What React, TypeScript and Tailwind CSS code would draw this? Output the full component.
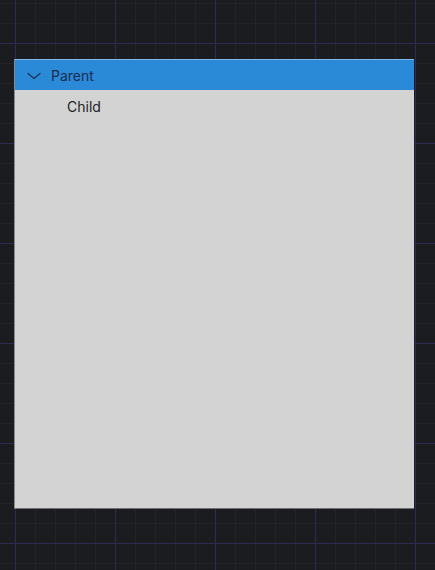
export default function App() {
  return (
    <div
      className="h-[570px] w-[435px] overflow-hidden bg-[#1b1c1f] pt-[59px] pl-[14px] font-['Inter','Liberation_Sans',sans-serif] bg-[image:linear-gradient(to_right,#2a2c52_1px,transparent_1px),linear-gradient(to_bottom,#2a2c52_1px,transparent_1px),linear-gradient(to_right,#222327_1px,transparent_1px),linear-gradient(to_bottom,#222327_1px,transparent_1px)] bg-[size:100px_100px,100px_100px,20px_20px,20px_20px] bg-[position:15px_43px,15px_43px,15px_3px,15px_3px]"
    >
      <div className="flex h-[450px] w-[400px] flex-col border-l border-[#8a8a8a] border-b border-b-[#6f6f6f] bg-[#d3d3d3]">
        <div className="flex h-[31px] items-center border-t border-[#7fb6e8] bg-[#2b8ad8] pl-[12px]">
          <svg width="14" height="8" viewBox="0 0 14 8" fill="none" className="mt-[1px]">
            <path d="M1 1.5 L7 6.5 L13 1.5" stroke="#1b2d4f" strokeWidth="1.2" strokeLinecap="round" strokeLinejoin="round" />
          </svg>
          <span className="ml-[10px] text-[14px] text-[#1b2d4f]">Parent</span>
        </div>
        <div className="flex h-[32px] items-center pl-[52px]">
          <span className="text-[14px] text-[#222222]">Child</span>
        </div>
      </div>
    </div>
  );
}
